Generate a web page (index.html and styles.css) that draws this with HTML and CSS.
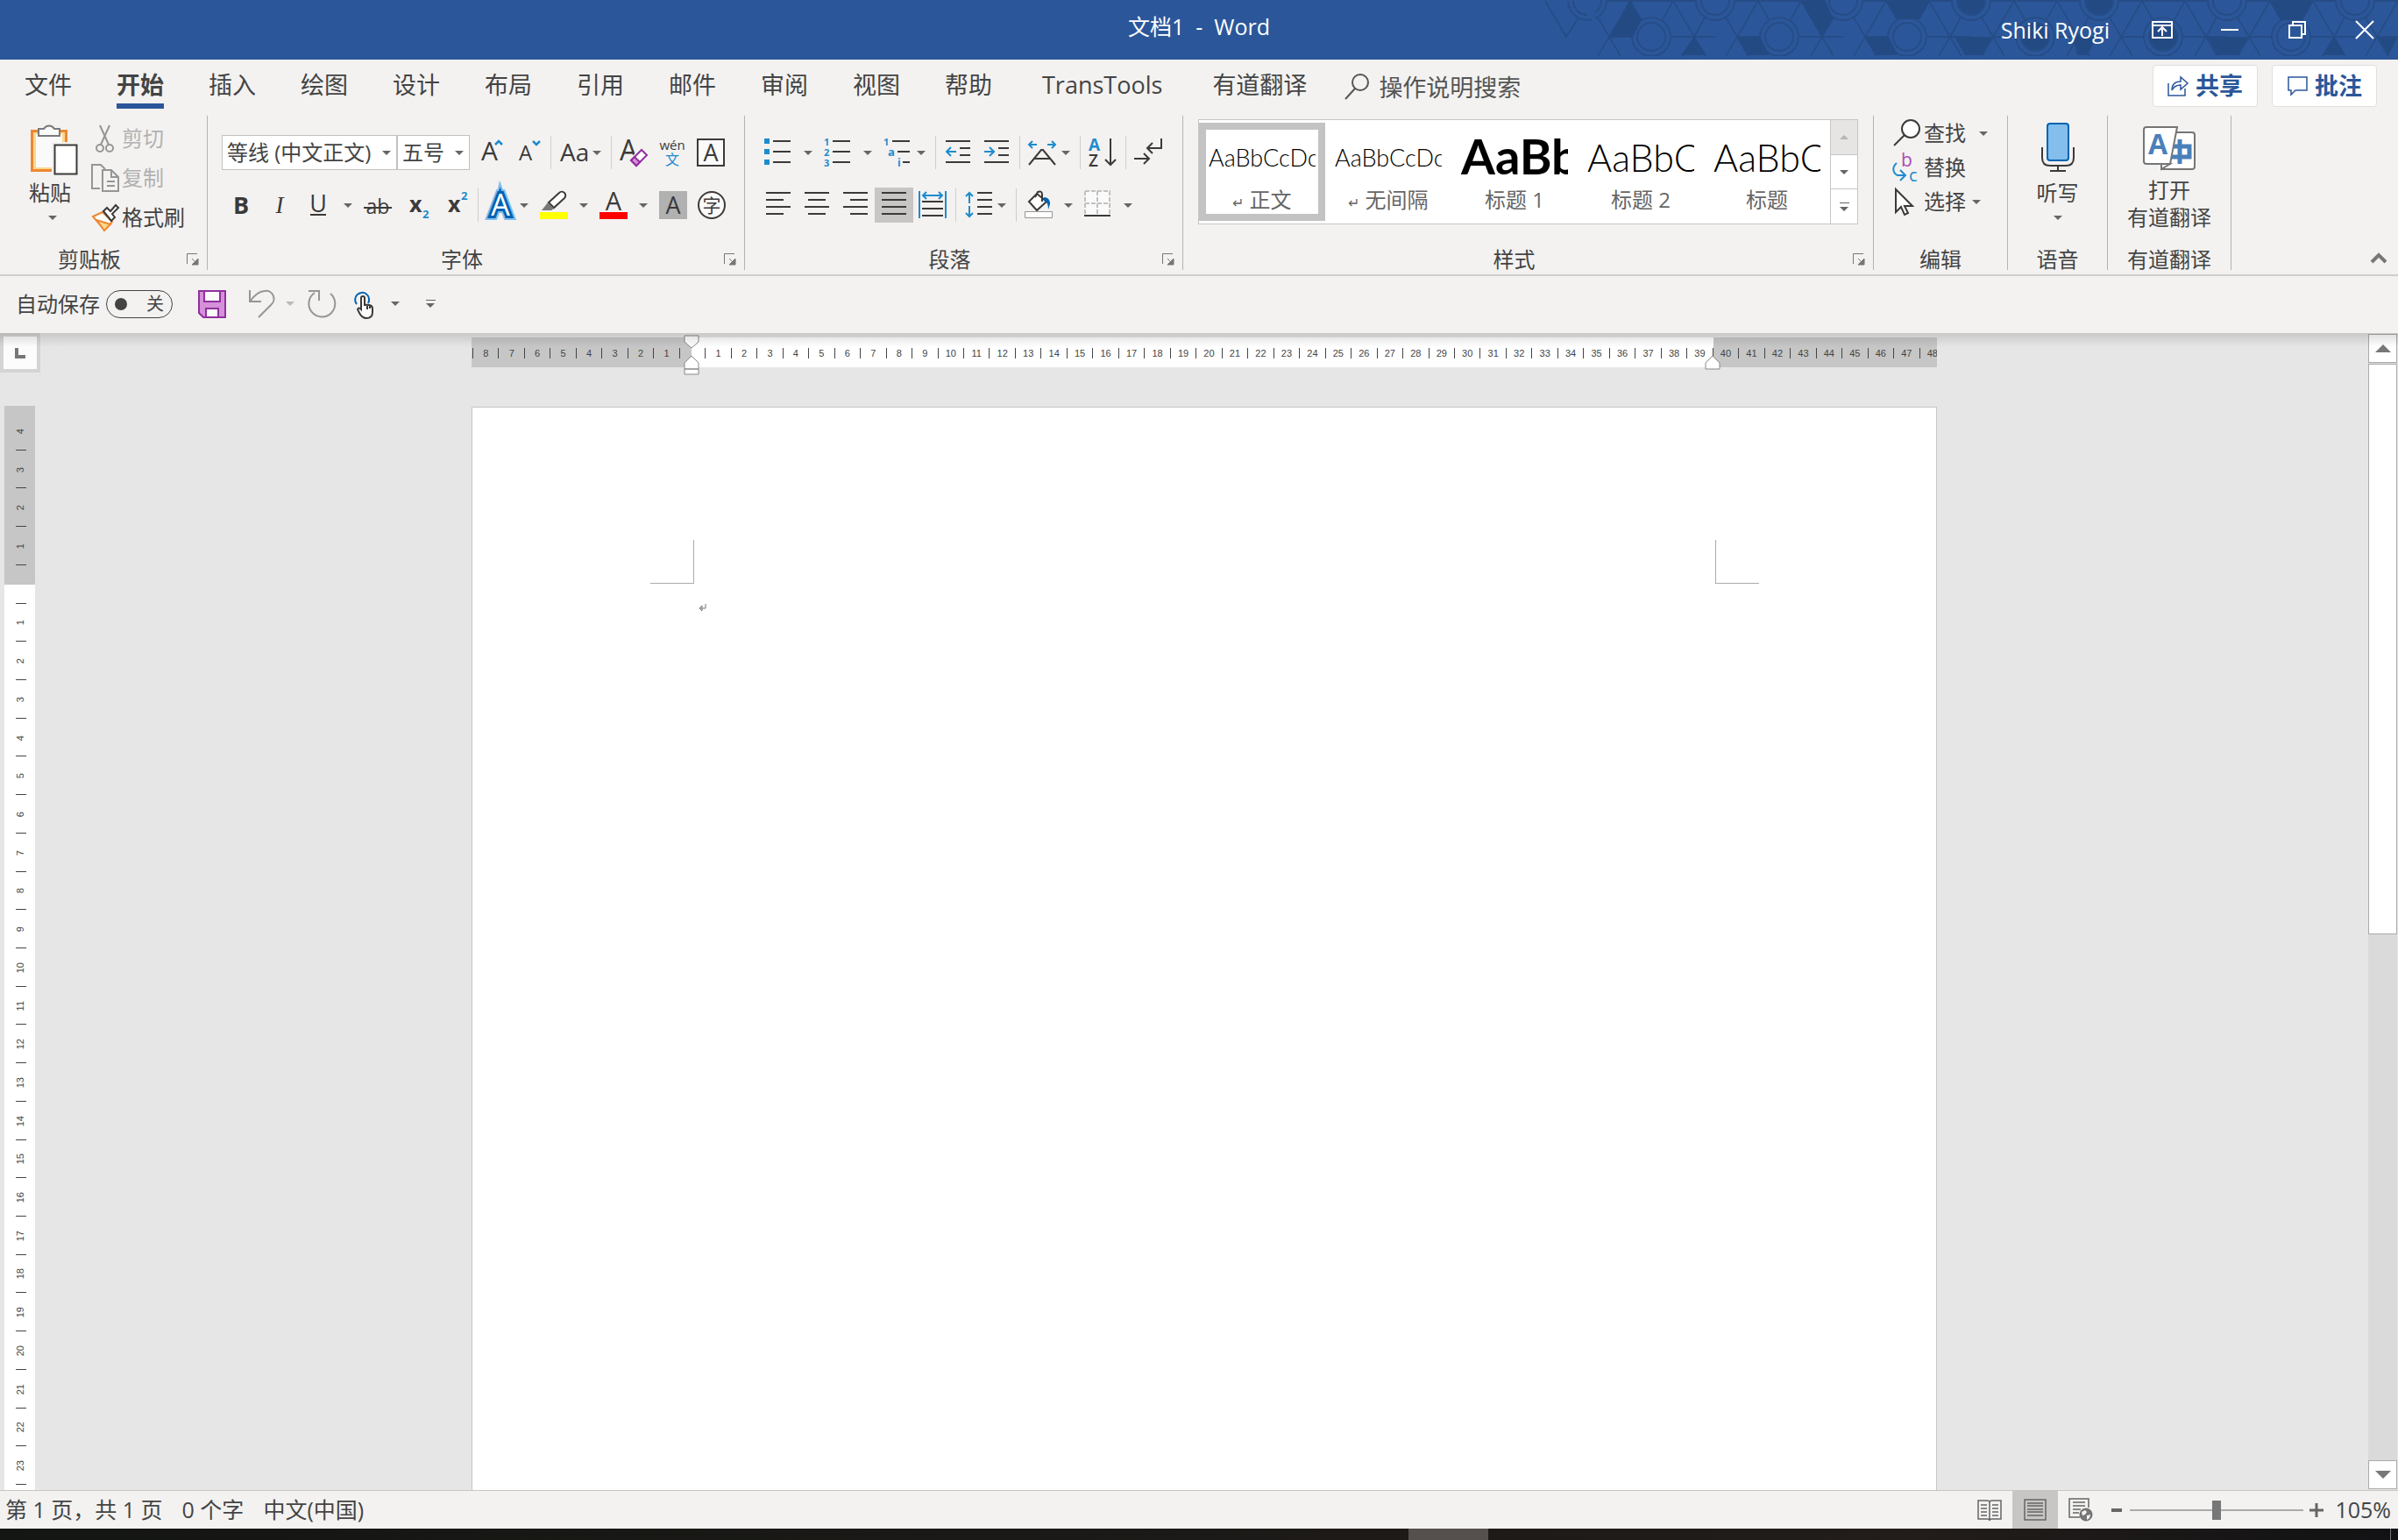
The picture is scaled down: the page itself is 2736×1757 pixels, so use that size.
FILE: index.html
```html
<!DOCTYPE html>
<html lang="zh-CN">
<head>
<meta charset="utf-8">
<title>文档1 - Word</title>
<link rel="stylesheet" href="styles.css">
</head>
<body>
<div class="app">
  <header class="titlebar">
    <svg class="title-art" width="976" height="64" viewBox="0 0 976 64" aria-hidden="true">
      <defs>
        <pattern id="mesh" x="51" y="0" width="146" height="64" patternUnits="userSpaceOnUse">
          <g fill="none" stroke="#264c87" stroke-width="2">
            <path d="M0 1H146M49 1L25 42L12 64M98 1L122 42L135 64M49 1L61 22M98 1L86 22M25 42L12 20M122 42L134 20M25 42L38 64M122 42L109 64M25 42H52M94 42H146"/>
          </g>
          <g fill="#2b579a" stroke="#264c87" stroke-width="2">
            <circle cx="0" cy="1" r="22"/><circle cx="146" cy="1" r="22"/><circle cx="73" cy="42" r="22"/>
            <circle cx="73" cy="42" r="16"/><circle cx="0" cy="1" r="16"/><circle cx="146" cy="1" r="16"/>
          </g>
        </pattern>
      </defs>
      <path d="M3 1L27 42L41 20" fill="none" stroke="#264c87" stroke-width="2"/>
      <rect x="60" y="0" width="916" height="64" fill="url(#mesh)"/>
      <path d="M51 17a16 16 0 0 1-16-16M56 22a22 22 0 0 1-27-21" fill="none" stroke="#264c87" stroke-width="2"/>
      <g fill="#244a84">
        <path d="M100 1l13 21-10 20H77zM173 42l14 21h-29zM223 42h25l11 21h-26zM295 1h28l9 21-13 20zM368 42h27l10 21h-25zM392 1h50l-12 21h-25zM470 42h43l-11 21h-20zM605 42h27l-10 21h-12zM758 42h47l-12 21h-23zM830 1h48l-11 22h-25zM903 42l12 21h-24zM952 42h24l-11 21z"/>
        <circle cx="489" cy="1" r="15"/><circle cx="635" cy="1" r="15"/><circle cx="562" cy="42" r="15"/><circle cx="708" cy="42" r="15"/>
      </g>
    </svg>
    <h1 class="doc-title">文档1&nbsp; -&nbsp; Word</h1>
    <div class="window-tools">
      <span class="account">Shiki Ryogi</span>
      <button class="win-btn" aria-label="功能区显示选项"><svg width="24" height="20" viewBox="0 0 24 20" fill="none" stroke="#fff" stroke-width="2"><path d="M1 1h22v18H1zM1 5h22M12 17V9M7 12l5-5 5 5"/></svg></button>
      <button class="win-btn" aria-label="最小化"><svg width="20" height="20" viewBox="0 0 20 20" fill="none" stroke="#fff" stroke-width="2"><path d="M0 10h20"/></svg></button>
      <button class="win-btn" aria-label="还原"><svg width="20" height="20" viewBox="0 0 20 20" fill="none" stroke="#fff" stroke-width="2"><path d="M1 5h14v14H1zM5 5V1h14v14h-4"/></svg></button>
      <button class="win-btn" aria-label="关闭"><svg width="20" height="20" viewBox="0 0 20 20" fill="none" stroke="#fff" stroke-width="2"><path d="M0 0l20 20M20 0L0 20"/></svg></button>
    </div>
  </header>

  <div class="tabbar">
    <nav class="tabs" aria-label="功能区选项卡">
      <button class="tab">文件</button>
      <button class="tab tab-active">开始</button>
      <button class="tab">插入</button>
      <button class="tab">绘图</button>
      <button class="tab">设计</button>
      <button class="tab">布局</button>
      <button class="tab">引用</button>
      <button class="tab">邮件</button>
      <button class="tab">审阅</button>
      <button class="tab">视图</button>
      <button class="tab">帮助</button>
      <button class="tab tab-latin">TransTools</button>
      <button class="tab">有道翻译</button>
    </nav>
    <label class="tellme">
      <svg width="30" height="32" viewBox="0 0 30 32" fill="none" stroke="#555" stroke-width="2"><circle cx="19" cy="11" r="9"/><path d="M13 18L2 30"/></svg>
      <input type="text" placeholder="操作说明搜索" aria-label="操作说明搜索">
    </label>
    <div class="share-tools">
      <button class="share-btn"><svg width="24" height="24" viewBox="0 0 24 24" fill="none" stroke="#2b579a" stroke-width="1.5"><path d="M1 9v14h19v-8M5 17c0-7 4-10 10-10V2l8 7-8 7v-5c-5 0-8 2-10 6z"/></svg>共享</button>
      <button class="share-btn"><svg width="24" height="24" viewBox="0 0 24 24" fill="none" stroke="#2b579a" stroke-width="1.5"><path d="M2 2h21v15H10l-5 5v-5H2z"/></svg>批注</button>
    </div>
  </div>

  <div class="ribbon">
    <section class="group g-clip">
      <div class="body clip-body">
        <button class="big paste">
          <svg width="54" height="60" viewBox="0 0 54 60"><path d="M1.500 9.500h39v45h-39z" fill="#fad88c" stroke="#ed8733" stroke-width="3"/><path d="M6 13h30v38H6z" fill="#fafafa"/><path d="M9 15V7h6a7 7 0 0 1 12 0h6v8z" fill="#fafafa" stroke="#7a7a7a" stroke-width="2"/><path d="M24 22h30v38H24z" fill="#f3f2f1"/><path d="M27.500 25.500h25v33h-25z" fill="#fff" stroke="#3b3a39" stroke-width="2"/></svg>
          <span>粘贴</span><i class="caret"></i>
        </button>
        <div class="stack clip-stack">
          <button class="cmd off"><svg width="32" height="32" viewBox="0 0 32 32" fill="none" stroke="#979593" stroke-width="2"><path d="M10 1l10 22M21 1L11 23"/><circle cx="10" cy="27" r="4"/><circle cx="21" cy="27" r="4"/></svg>剪切</button>
          <button class="cmd off"><svg width="32" height="32" viewBox="0 0 32 32" fill="none" stroke="#979593" stroke-width="2"><path d="M10 28H1V1h10l5 5"/><path d="M13 7h10l8 8v16H13zM23 7v8h8M18 20h9M18 25h9"/></svg>复制</button>
          <button class="cmd"><svg width="32" height="32" viewBox="0 0 32 32" fill="none" stroke="#3b3a39" stroke-width="2"><path d="M2 15l11-5 11 11-9 9z" fill="#fff" stroke="#ed8733"/><path d="M6 19l16 5-7 7z" fill="#fad88c" stroke="#ed8733"/><path d="M14 9l4-4 4 4 6-7 3 3-7 7 3 4-4 4z" fill="#fff"/></svg>格式刷</button>
        </div>
      </div>
      <footer class="foot"><span>剪贴板</span><button class="launcher" aria-label="剪贴板选项"><svg width="14" height="14" viewBox="0 0 14 14"><path d="M.500 12V.500H12" fill="none" stroke="#777"/><path d="M6 6l5 5M13 6v7H6z" fill="#777" stroke="#777"/></svg></button></footer>
    </section>

    <section class="group g-font">
      <div class="body rows">
        <div class="row">
          <label class="combo combo-font"><select aria-label="字体"><option>等线 (中文正文)</option></select><i class="caret"></i></label>
          <label class="combo combo-size"><select aria-label="字号"><option>五号</option></select><i class="caret"></i></label>
          <button class="ic ic-first" aria-label="增大字号"><svg width="32" height="32" viewBox="0 0 32 32"><text x="3" y="25" font-size="30" class="gl">A</text><path d="M19 7l4-4 4 4" fill="none" stroke="#1e8bcd" stroke-width="2.500"/></svg></button>
          <button class="ic ic-narrow" aria-label="减小字号"><svg width="32" height="32" viewBox="0 0 32 32"><text x="4" y="25" font-size="24" class="gl">A</text><path d="M20 3l4 4 4-4" fill="none" stroke="#1e8bcd" stroke-width="2.500"/></svg></button>
          <i class="sep"></i>
          <button class="ic" aria-label="更改大小写"><svg width="36" height="32" viewBox="0 0 36 32"><text x="3" y="26" font-size="28" class="gl">Aa</text></svg></button><button class="drop tight" aria-label="更多"><i class="caret"></i></button>
          <i class="sep"></i>
          <button class="ic" aria-label="清除格式"><svg width="32" height="32" viewBox="0 0 32 32"><text x="0" y="25" font-size="32" class="gl">A</text><path d="M13 25l12-12 6 6-12 12z" fill="#fff" stroke="#f3f2f1" stroke-width="5"/><path d="M13 25l12-12 6 6-12 12z" fill="#fff" stroke="#922fa0" stroke-width="2"/><path d="M13 25l4-4 6 6-4 4z" fill="#d490d8" stroke="#922fa0" stroke-width="2"/></svg></button>
          <button class="ic" aria-label="拼音指南"><svg width="32" height="32" viewBox="0 0 32 32"><text x="16" y="13" font-size="15" text-anchor="middle" class="gl">wén</text><text x="16" y="30" font-size="16" text-anchor="middle" class="gb">文</text></svg></button>
          <button class="ic" aria-label="字符边框"><svg width="32" height="32" viewBox="0 0 32 32"><path d="M1 1h30v30H1z" fill="#fafafa" stroke="#3b3a39" stroke-width="2"/><text x="16" y="26" font-size="27" text-anchor="middle" class="gl">A</text></svg></button>
        </div>
        <div class="row">
          <button class="ic t-b" aria-label="加粗">B</button>
          <button class="ic t-i" aria-label="倾斜">I</button>
          <button class="ic" aria-label="下划线"><svg width="32" height="32" viewBox="0 0 32 32"><text x="16" y="24" font-size="27" text-anchor="middle" class="gl">U</text><path d="M7 27h18" stroke="#3b3a39" stroke-width="2"/></svg></button><button class="drop" aria-label="更多"><i class="caret"></i></button>
          <button class="ic" aria-label="删除线"><svg width="32" height="32" viewBox="0 0 32 32"><text x="16" y="26" font-size="23" text-anchor="middle" class="gl">ab</text><path d="M0 19h32" stroke="#3b3a39" stroke-width="2"/></svg></button>
          <button class="ic" aria-label="下标"><svg width="32" height="32" viewBox="0 0 32 32"><text x="8" y="24" font-size="25" class="gl bold">x</text><text x="23" y="31" font-size="13" class="gb bold">2</text></svg></button>
          <button class="ic" aria-label="上标"><svg width="32" height="32" viewBox="0 0 32 32"><text x="8" y="24" font-size="25" class="gl bold">x</text><text x="23" y="10" font-size="13" class="gb bold">2</text></svg></button>
          <i class="sep"></i>
          <button class="ic" aria-label="文本效果"><svg width="32" height="32" viewBox="0 0 32 32"><g font-size="34" text-anchor="middle"><text x="16" y="28" class="halo">A</text><text x="16" y="28" class="rim">A</text></g></svg></button><button class="drop tight" aria-label="更多"><i class="caret"></i></button>
          <button class="ic" aria-label="突出显示"><svg width="32" height="32" viewBox="0 0 32 32"><path d="M10 13L22 2a4 4 0 0 1 6 6L16 19z" fill="#fff" stroke="#3b3a39" stroke-width="2"/><path d="M2 22l7-9 7 7-3 2z" fill="#777"/><path d="M0 24h32v8H0z" fill="#ff0"/></svg></button><button class="drop" aria-label="更多"><i class="caret"></i></button>
          <button class="ic" aria-label="字体颜色"><svg width="32" height="32" viewBox="0 0 32 32"><text x="16" y="22" font-size="29" text-anchor="middle" class="gl">A</text><path d="M0 24h32v8H0z" fill="#f00"/></svg></button><button class="drop" aria-label="更多"><i class="caret"></i></button>
          <button class="ic" aria-label="字符底纹"><svg width="32" height="32" viewBox="0 0 32 32"><path d="M0 0h32v32H0z" fill="#b1b1b1"/><text x="16" y="26" font-size="27" text-anchor="middle" class="gl">A</text></svg></button>
          <button class="ic" aria-label="带圈字符"><svg width="32" height="32" viewBox="0 0 32 32"><circle cx="16" cy="16" r="15" fill="#fafafa" stroke="#3b3a39" stroke-width="2"/><text x="16" y="24" font-size="21" text-anchor="middle" class="gl">字</text></svg></button>
        </div>
      </div>
      <footer class="foot"><span>字体</span><button class="launcher" aria-label="字体选项"><svg width="14" height="14" viewBox="0 0 14 14"><path d="M.500 12V.500H12" fill="none" stroke="#777"/><path d="M6 6l5 5M13 6v7H6z" fill="#777" stroke="#777"/></svg></button></footer>
    </section>

    <section class="group g-para">
      <div class="body rows">
        <div class="row">
          <button class="ic" aria-label="项目符号"><svg width="32" height="32" viewBox="0 0 32 32"><path d="M0 0h6v6H0zM0 12h6v6H0zM0 24h6v6H0z" fill="#1e8bcd"/><path d="M10 3h20M10 15h20M10 27h20" class="ln"/></svg></button><button class="drop" aria-label="更多"><i class="caret"></i></button>
          <button class="ic" aria-label="编号"><svg width="32" height="32" viewBox="0 0 32 32"><g font-size="11" class="gb bold"><text x="0" y="8">1</text><text x="0" y="20">2</text><text x="0" y="32">3</text></g><path d="M10 3h20M10 15h20M10 27h20" class="ln"/></svg></button><button class="drop" aria-label="更多"><i class="caret"></i></button>
          <button class="ic" aria-label="多级列表"><svg width="32" height="32" viewBox="0 0 32 32"><g font-size="11" class="gb bold"><text x="0" y="8">1</text><text x="5" y="20" font-size="13">a</text><text x="16" y="32" font-size="12">i</text></g><path d="M10 3h20M16 15h14M22 27h8" class="ln"/></svg></button><button class="drop tight" aria-label="更多"><i class="caret"></i></button>
          <i class="sep"></i>
          <button class="ic" aria-label="减少缩进量"><svg width="32" height="32" viewBox="0 0 32 32"><path d="M2 3h28M18 11h12M18 19h12M2 27h28" class="ln"/><path d="M14 15H3M8 10l-5 5 5 5" class="lb"/></svg></button>
          <button class="ic" aria-label="增加缩进量"><svg width="32" height="32" viewBox="0 0 32 32"><path d="M2 3h28M18 11h12M18 19h12M2 27h28" class="ln"/><path d="M2 15h11M8 10l5 5-5 5" class="lb"/></svg></button>
          <i class="sep"></i>
          <button class="ic" aria-label="中文版式"><svg width="32" height="32" viewBox="0 0 32 32"><path d="M1 30l14-17h2l14 17M7 23h18" class="ln"/><path d="M10 7H1M5 3L1 7l4 4M22 7h9M27 3l4 4-4 4" class="lb"/></svg></button><button class="drop tight" aria-label="更多"><i class="caret"></i></button>
          <i class="sep"></i>
          <button class="ic" aria-label="排序"><svg width="32" height="32" viewBox="0 0 32 32"><text x="0" y="14" font-size="19" class="gb bold">A</text><text x="0" y="32" font-size="19" class="gl semi">Z</text><path d="M25 0v30M19 24l6 6 6-6" class="ln"/></svg></button>
          <i class="sep"></i>
          <button class="ic" aria-label="显示编辑标记"><svg width="32" height="32" viewBox="0 0 32 32"><path d="M31 0v11H16M21 5l-6 6 6 6M0 23h17M11 17l6 6-6 6" class="ln"/></svg></button>
        </div>
        <div class="row">
          <button class="ic" aria-label="左对齐"><svg width="32" height="32" viewBox="0 0 32 32"><path d="M2 2h28M2 10h20M2 18h28M2 26h20" class="ln"/></svg></button>
          <button class="ic" aria-label="居中"><svg width="32" height="32" viewBox="0 0 32 32"><path d="M2 2h28M6 10h20M2 18h28M6 26h20" class="ln"/></svg></button>
          <button class="ic" aria-label="右对齐"><svg width="32" height="32" viewBox="0 0 32 32"><path d="M2 2h28M10 10h20M2 18h28M10 26h20" class="ln"/></svg></button>
          <button class="ic on" aria-label="两端对齐"><svg width="32" height="32" viewBox="0 0 32 32"><path d="M2 2h28M2 10h28M2 18h28M2 26h28" class="ln"/></svg></button>
          <button class="ic" aria-label="分散对齐"><svg width="32" height="32" viewBox="0 0 32 32"><path d="M4 12h24M4 20h24M4 28h24" class="ln"/><path d="M1 0v31M31 0v31M5 5h22M9 1L5 5l4 4M23 1l4 4-4 4" class="lb"/></svg></button>
          <i class="sep"></i>
          <button class="ic" aria-label="行距"><svg width="32" height="32" viewBox="0 0 32 32"><path d="M15 2h17M15 10h17M15 18h17M15 26h17" class="ln"/><path d="M6 14V2M2 6l4-4 4 4M6 17v12M2 25l4 4 4-4" class="lb"/></svg></button><button class="drop tight" aria-label="更多"><i class="caret"></i></button>
          <i class="sep"></i>
          <button class="ic" aria-label="底纹"><svg width="32" height="32" viewBox="0 0 32 32"><path d="M5 12l9-9 11 9-11 10z" fill="#fff" stroke="#3b3a39" stroke-width="2"/><path d="M12 7l3-6q5-2 5 3v8" fill="none" stroke="#3b3a39" stroke-width="2"/><path d="M22 7q7 0 7 8l-2 6q0-9-5-10z" fill="#0063b1"/><path d="M.500 23.500h31v7H.500z" fill="#fff" stroke="#979593"/></svg></button><button class="drop" aria-label="更多"><i class="caret"></i></button>
          <button class="ic" aria-label="边框"><svg width="32" height="32" viewBox="0 0 32 32"><path d="M1 0h29v28H1z" fill="#fafafa"/><path d="M1 0h29M1 14h29M1 0v26M15 0v26M29 0v26" fill="none" stroke="#c3c1bf" stroke-width="2" stroke-dasharray="5 2"/><path d="M0 28h30" class="ln"/></svg></button><button class="drop" aria-label="更多"><i class="caret"></i></button>
        </div>
      </div>
      <footer class="foot"><span>段落</span><button class="launcher" aria-label="段落选项"><svg width="14" height="14" viewBox="0 0 14 14"><path d="M.500 12V.500H12" fill="none" stroke="#777"/><path d="M6 6l5 5M13 6v7H6z" fill="#777" stroke="#777"/></svg></button></footer>
    </section>

    <section class="group g-style">
      <div class="body style-body">
        <div class="gallery">
          <button class="style chosen"><span class="sample s-body">AaBbCcDc</span><span class="name"><small>↵</small> 正文</span></button>
          <button class="style"><span class="sample s-body">AaBbCcDc</span><span class="name"><small>↵</small> 无间隔</span></button>
          <button class="style"><span class="sample s-h1">AaBb</span><span class="name">标题 1</span></button>
          <button class="style"><span class="sample s-h2">AaBbC</span><span class="name">标题 2</span></button>
          <button class="style"><span class="sample s-h2">AaBbC</span><span class="name">标题</span></button>
          <div class="gallery-nav">
            <button class="nav-off" aria-label="上一行"><i class="caret up"></i></button>
            <button aria-label="下一行"><i class="caret"></i></button>
            <button aria-label="其他"><i class="bar"></i><i class="caret"></i></button>
          </div>
        </div>
      </div>
      <footer class="foot"><span>样式</span><button class="launcher" aria-label="样式选项"><svg width="14" height="14" viewBox="0 0 14 14"><path d="M.500 12V.500H12" fill="none" stroke="#777"/><path d="M6 6l5 5M13 6v7H6z" fill="#777" stroke="#777"/></svg></button></footer>
    </section>

    <section class="group g-edit">
      <div class="body stack edit-stack">
        <button class="cmd"><svg width="34" height="32" viewBox="0 0 34 32" fill="#fff" stroke="#3b3a39" stroke-width="2"><circle cx="22" cy="11" r="10"/><path d="M15 18L3 30"/></svg>查找<i class="caret far"></i></button>
        <button class="cmd"><svg width="34" height="32" viewBox="0 0 34 32"><text x="11" y="15" font-size="21" fill="#ae4bb5">b</text><text x="20" y="32" font-size="20" class="gb">c</text><path d="M6 11c-6 5-4 12 1 14h9M10 19l6 6-6 6" class="lb"/></svg>替换</button>
        <button class="cmd"><svg width="34" height="32" viewBox="0 0 34 32" fill="#fff" stroke="#3b3a39" stroke-width="2"><path d="M5 2v26l6-6 4 9 4-2-4-8h9z"/></svg>选择<i class="caret near"></i></button>
      </div>
      <footer class="foot"><span>编辑</span></footer>
    </section>

    <section class="group g-voice">
      <div class="body">
        <button class="big">
          <svg width="40" height="60" viewBox="0 0 40 60" fill="none" stroke="#3b3a39" stroke-width="2"><rect x="8" y="1" width="24" height="42" rx="3" fill="#83beec" stroke="#0063b1"/><path d="M2 28v12q0 9 9 9h18q9 0 9-9V28M20 49v6M11 55h18"/></svg>
          <span>听写</span><i class="caret"></i>
        </button>
      </div>
      <footer class="foot"><span>语音</span></footer>
    </section>

    <section class="group g-youdao">
      <div class="body">
        <button class="big">
          <svg width="60" height="57" viewBox="0 0 60 57" stroke="#757575" stroke-width="2"><path d="M37 11h19q3 0 3 3v36q0 3-3 3H21l0-6z" fill="#fff"/><path d="M42 19v28M33 27h20v12H33" fill="none" stroke="#4a80ba" stroke-width="5"/><path d="M4 5h35l-8 42H4q-3 0-3-3V8q0-3 3-3z" fill="#fff"/><path d="M31 47l-10 6v-6z" fill="#fff"/><text x="17" y="36" font-size="32" text-anchor="middle" fill="#4a80ba" stroke="none" class="bold">A</text></svg>
          <span>打开</span><span>有道翻译</span>
        </button>
      </div>
      <footer class="foot"><span>有道翻译</span></footer>
    </section>

    <button class="collapse" aria-label="折叠功能区"><svg width="20" height="12" viewBox="0 0 20 12" fill="none" stroke="#777" stroke-width="4"><path d="M2 11l8-8 8 8"/></svg></button>
  </div>

  <div class="quick">
    <label class="autosave">自动保存<span class="switch"><input type="checkbox"><span class="knob"></span>关</span></label>
    <button class="qk" aria-label="保存"><svg width="32" height="32" viewBox="0 0 32 32" stroke="#922fa0" stroke-width="2"><path d="M1 1h30v30H6l-5-5z" fill="#d490d8"/><path d="M7 1h18v12H7zM9 21h14v10H9z" fill="#fafafa"/></svg></button>
    <button class="qk undo" aria-label="撤消"><svg width="32" height="32" viewBox="0 0 32 32" fill="none" stroke="#979593" stroke-width="2"><path d="M3 0v13h13M3 13C9 5 14 1 20 1a9 9 0 0 1 7 16L13 31"/></svg></button><button class="drop pale" aria-label="更多"><i class="caret"></i></button>
    <button class="qk" aria-label="恢复"><svg width="32" height="32" viewBox="0 0 32 32" fill="none" stroke="#979593" stroke-width="2"><path d="M0 1h12v11M7 3a15 15 0 1 0 18 1"/></svg></button>
    <button class="qk" aria-label="触摸/鼠标模式"><svg width="32" height="32" viewBox="0 0 32 32" fill="none" stroke="#3b3a39" stroke-width="2"><path d="M7 16a8 8 0 1 1 13-1" stroke="#0063b1"/><path d="M12 22V9q0-2 2-2t2 2v8q9-1 9 4v4q0 7-7 7-5 0-8-6l-2-4q1-3 4 0zM19 18v4M22 18v3" fill="#fff"/></svg></button><button class="drop" aria-label="更多"><i class="caret"></i></button>
    <button class="drop custom" aria-label="自定义快速访问工具栏"><i class="bar"></i><i class="caret"></i></button>
  </div>

  <main class="work">
    <div class="left-rail">
      <button class="tabstop" aria-label="制表符"><i></i></button>
      <div class="vruler" id="vruler"></div>
    </div>
    <div class="canvas">
      <div class="hruler">
        <div class="hruler-scale" id="hruler"></div>
        <svg class="marker m-left" width="18" height="46" viewBox="0 0 18 46" fill="#fff" stroke="#8a8886"><path d="M1 1h16v7l-8 7-8-7zM1 39v-7l8-8 8 8v7zM1 39h16v6H1z"/></svg>
        <svg class="marker m-right" width="18" height="46" viewBox="0 0 18 46" fill="#fff" stroke="#8a8886"><path d="M1 39v-7l8-8 8 8v7z"/></svg>
      </div>
      <article class="page" contenteditable="true" aria-label="文档正文">
        <span class="crop crop-l"></span><span class="crop crop-r"></span>
        <p><svg width="9" height="9" viewBox="0 0 9 9" fill="none" stroke="#777"><path d="M8 0v5H1M4 2L1 5l3 3z"/></svg></p>
      </article>
    </div>
    <div class="scroll">
      <button aria-label="向上滚动"><i class="tri tri-up"></i></button>
      <div class="track"><div class="thumb"></div></div>
      <button aria-label="向下滚动"><i class="tri tri-down"></i></button>
    </div>
  </main>

  <footer class="status">
    <span>第 1 页，共 1 页</span><span>0 个字</span><span>中文(中国)</span>
    <div class="views">
      <button aria-label="阅读视图"><svg width="28" height="26" viewBox="0 0 28 26" fill="none" stroke="#666"><path d="M1 2h10q3 0 3 2 0-2 3-2h10v21H17q-3 0-3 2 0-2-3-2H1zM14 4v20M4 7h7M4 11h7M4 15h7M4 19h7M17 7h7M17 11h7M17 15h7M17 19h7" stroke-width="1.500"/></svg></button>
      <button class="view-on" aria-label="页面视图"><svg width="26" height="26" viewBox="0 0 26 26" fill="none" stroke="#666"><path d="M1 1h24v23H1zM4 5h18M4 8h18M4 12h18M4 15h18M4 19h18" stroke-width="1.500"/></svg></button>
      <button aria-label="Web 版式视图"><svg width="28" height="28" viewBox="0 0 28 28" fill="none" stroke="#666"><path d="M13 22H1V1h22v10M5 5h14M5 9h14M5 13h9M5 17h7" stroke-width="1.500"/><circle cx="20" cy="19" r="7" fill="#777"/><path d="M15 16l4-2 2 2-2 3-3 1zM21 20l4-1-1 4-3 2z" fill="#f3f2f1" stroke="none"/></svg></button>
    </div>
    <div class="zoom">
      <button aria-label="缩小"><svg width="16" height="16" viewBox="0 0 16 16"><path d="M2 8h12" stroke="#666" stroke-width="4"/></svg></button>
      <input type="range" min="10" max="200" value="105" aria-label="缩放">
      <button aria-label="放大"><svg width="16" height="16" viewBox="0 0 16 16"><path d="M0 8h16M8 0v16" stroke="#666" stroke-width="3"/></svg></button>
      <button class="percent">105%</button>
    </div>
  </footer>
  <div class="taskbar"><span class="task"></span><span class="peek"></span></div>
</div>
<script src="app.js"></script>
</body>
</html>
```
FILE: styles.css
```css
* { box-sizing: border-box; }
body {
  margin: 0;
  font: 24px/32px "Open Sans", "Noto Sans CJK SC", sans-serif;
  color: #444;
  background: #f3f2f1;
}
button, input, select {
  font: inherit;
  color: inherit;
  border: 0;
  padding: 0;
  margin: 0;
  background: none;
}
svg { display: block; flex: none; overflow: visible; }
h1, p { margin: 0; }
.app { display: flex; flex-direction: column; height: 100vh; overflow: hidden; }

/* icon strokes and letters */
.ln { fill: none; stroke: #3b3a39; stroke-width: 2; }
.lb { fill: none; stroke: #1e8bcd; stroke-width: 2; }
.gl { fill: #3b3a39; }
.gb { fill: #1e8bcd; }
.bold { font-weight: 700; }
.semi { font-weight: 600; }
.halo { fill: #83beec; stroke: #83beec; stroke-width: 10; }
.rim { fill: #fff; stroke: #0063b1; stroke-width: 6; paint-order: stroke; }

.caret {
  display: block;
  flex: none;
  border: 5px solid transparent;
  border-top-color: #666;
  border-bottom: 0;
}
.caret.up { border-top: 0; border-bottom: 5px solid #b8b6b4; }
.bar { display: block; width: 11px; height: 1px; background: #666; }

/* title bar */
.titlebar {
  position: relative;
  flex: none;
  height: 68px;
  display: grid;
  grid-template-columns: 1fr auto 1fr;
  align-items: center;
  background: #2b579a;
  color: #fff;
  font-size: 25px;
}
.title-art { position: absolute; right: 0; top: 0; }
.doc-title { grid-column: 2; font-size: 25px; font-weight: 400; padding-bottom: 8px; }
.window-tools { position: relative; display: flex; justify-content: flex-end; align-items: center; }
.account { margin-right: 21px; }
.win-btn { width: 77px; height: 64px; display: grid; place-items: center; }

/* tabs */
.tabbar { flex: none; height: 64px; display: flex; align-items: flex-start; padding-right: 24px; font-size: 27px; }
.tabs { display: flex; padding-left: 28px; gap: 51px; }
.tab { height: 56px; padding: 8px 0 0; border-bottom: 6px solid transparent; white-space: nowrap; }
.tab-active { font-weight: 700; border-bottom-color: #2b579a; }
.tab-latin { margin: 0 6px; }
.tellme { display: flex; align-items: center; gap: 10px; height: 62px; margin-left: 42px; }
.tellme input { width: 200px; height: 40px; outline: 0; }
.tellme input::placeholder { color: #555; opacity: 1; }
.share-tools { display: flex; gap: 16px; margin: 6px 0 0 auto; }
.share-btn {
  width: 120px;
  height: 48px;
  display: flex;
  align-items: center;
  justify-content: center;
  gap: 8px;
  background: #fff;
  border: 1px solid #e1dfdd;
  border-radius: 4px;
  color: #2b579a;
  font-weight: 700;
}

/* ribbon */
.ribbon { flex: none; display: flex; height: 183px; border-bottom: 2px solid #d0cecc; padding-bottom: 5px; }
.group { flex: none; display: flex; flex-direction: column; border-right: 1px solid #b5b3b1; }
.g-clip { width: 237px; }
.g-font { width: 613px; }
.g-para { width: 500px; }
.g-style { width: 788px; }
.g-edit { width: 153px; }
.g-voice { width: 114px; }
.g-youdao { width: 141px; }
.body { flex: 1; min-height: 0; }
.foot { display: flex; align-items: center; height: 32px; margin-bottom: -4px; }
.foot span { flex: 1; text-align: center; }
.launcher { width: 32px; height: 24px; display: grid; place-items: center; }

.big { width: 100%; display: flex; flex-direction: column; align-items: center; padding-top: 8px; line-height: 31px; }
.big svg { margin-bottom: 4px; }
.big .caret { margin-top: 11px; }
.clip-body { display: flex; }
.paste { width: 104px; padding-left: 20px; }
.paste span { margin-right: 10px; }
.paste .caret { margin-right: 4px; }
.stack { display: flex; flex-direction: column; align-items: flex-start; }
.cmd { display: flex; align-items: center; gap: 3px; white-space: nowrap; }
.clip-stack { gap: 13px; padding-top: 10px; }
.edit-stack { gap: 7px; padding: 4px 0 0 20px; }
.off { color: #b1b1b1; }
.far { margin-left: 12px; }
.near { margin-left: 4px; }

.rows { display: flex; flex-direction: column; gap: 20px; padding: 22px 0 0 16px; }
.row { display: flex; align-items: center; height: 40px; }
.ic { flex: none; width: 44px; height: 40px; display: grid; place-items: center; color: #3b3a39; }
.ic-first { margin-left: 4px; }
.ic-narrow { width: 40px; }
.on { background: #c8c6c4; }
.t-b { font-size: 27px; font-weight: 700; }
.t-i { font-size: 27px; font-family: "Liberation Serif", serif; font-style: italic; }
.drop { flex: none; width: 24px; height: 40px; display: grid; place-items: center; }
.tight { width: 17px; justify-items: start; }
.sep { flex: none; width: 8px; height: 38px; background: linear-gradient(#d0cecc, #d0cecc) center / 1px 100% no-repeat; }
.combo { position: relative; height: 40px; border: 1px solid #c3c1bf; background: #fff; }
.combo select { width: 100%; height: 100%; padding-left: 5px; appearance: none; outline: 0; }
.combo .caret { position: absolute; right: 6px; top: 17px; pointer-events: none; }
.combo-font { width: 200px; }
.combo-size { width: 83px; }

.style-body { padding: 4px 17px 0; }
.gallery { display: flex; height: 120px; border: 1px solid #c8c6c4; background: #fff; }
.style { flex: none; width: 144px; height: 112px; margin-top: 3px; padding: 0 3px; border: 8px solid transparent; display: flex; flex-direction: column; }
.chosen { border-color: #c3c3c3; }
.sample { flex: none; width: 122px; height: 64px; overflow: hidden; text-align: left; white-space: nowrap; color: #000; font-family: Lato, sans-serif; font-weight: 300; }
.s-body { font-size: 27px; line-height: 64px; }
.s-h1 { font-size: 56px; line-height: 60px; font-weight: 700; }
.s-h2 { font-size: 43px; line-height: 64px; }
.name { flex: none; width: 122px; text-align: center; color: #666; white-space: nowrap; }
.name small { font-size: 16px; line-height: 16px; }
.gallery-nav { flex: 1; display: flex; flex-direction: column; border-left: 1px solid #c8c6c4; }
.gallery-nav button { flex: 1; display: flex; flex-direction: column; gap: 4px; align-items: center; justify-content: center; border-bottom: 1px solid #c8c6c4; }
.gallery-nav button:last-child { border: 0; }
.nav-off { background: #e6e5e4; }
.collapse { align-self: flex-end; margin: 0 12px 8px auto; }

/* quick access bar */
.quick { flex: none; height: 65px; display: flex; align-items: center; padding: 0 0 2px 18px; }
.autosave { display: flex; align-items: center; gap: 7px; margin-right: 22px; }
.switch { position: relative; width: 76px; height: 32px; display: flex; align-items: center; gap: 22px; padding-left: 9px; border: 1px solid #444; border-radius: 16px; font-size: 20px; }
.switch input { position: absolute; inset: 0; width: 100%; height: 100%; opacity: 0; }
.knob { width: 14px; height: 14px; border-radius: 50%; background: #444; }
.qk { flex: none; width: 46px; height: 40px; display: grid; place-items: center; }
.qk + .qk { margin-left: 2px; }
.quick .undo { margin-left: 10px; }
.pale { opacity: .4; width: 20px; }
.pale + .qk { margin-left: 4px; }
.custom { display: flex; flex-direction: column; align-items: center; justify-content: center; gap: 3px; margin-left: 16px; }

/* document area */
.work { position: relative; flex: 1; min-height: 0; display: flex; background: #e6e6e6; }
.work::before { content: ""; position: absolute; left: 0; right: 0; top: 0; height: 16px; background: linear-gradient(rgba(0, 0, 0, .13), rgba(0, 0, 0, 0)); pointer-events: none; z-index: 1; }
.left-rail { flex: none; width: 46px; display: flex; flex-direction: column; }
.tabstop { width: 46px; height: 45px; display: grid; place-items: center; border: 4px solid #d4d4d4; background: #fcfcfc; }
.tabstop i { width: 12px; height: 12px; border: solid #777; border-width: 0 0 4px 4px; }
.vruler { flex: 1; min-height: 0; overflow: hidden; width: 35px; margin: 38px 0 0 5px; padding-top: 7px; background: linear-gradient(#c6c6c6 204px, #fff 204px); }
.vscale { display: grid; height: 1224px; grid-auto-rows: 1fr; font: 11px/12px "Liberation Sans", sans-serif; }
.vscale span { display: flex; align-items: center; justify-content: center; position: relative; }
.vscale b { font-weight: 400; writing-mode: vertical-rl; transform: rotate(180deg); }
.vscale span::after { content: ""; position: absolute; bottom: 0; left: 13px; width: 12px; height: 1px; background: #444; }
.canvas { flex: 1; min-width: 0; display: flex; flex-direction: column; align-items: center; }
.hruler { position: relative; flex: none; width: 1672px; height: 34px; margin-top: 5px; background: linear-gradient(90deg, #c6c6c6 251px, #fff 251px 1417px, #c6c6c6 1417px); }
.hruler-scale { height: 34px; overflow: hidden; padding-top: 12px; font: 11px/12px "Liberation Sans", sans-serif; }
.hscale { display: grid; width: 1680px; grid-auto-flow: column; grid-auto-columns: 1fr; margin-left: 1px; }
.hscale span { height: 12px; text-align: center; border-left: 1px solid #444; }
.marker { position: absolute; top: -3px; }
.m-left { left: 242px; }
.m-right { left: 1407px; }
.page { position: relative; flex: 1; width: 1672px; margin-top: 45px; border: 1px solid #c6c6c6; border-bottom: 0; background: #fff; outline: 0; padding: 224px 252px 0 258px; }
.crop { position: absolute; top: 151px; width: 50px; height: 50px; border: solid #ababab; border-width: 0 0 1px; }
.crop-l { left: 203px; border-right-width: 1px; }
.crop-r { right: 202px; border-left-width: 1px; }

.scroll { flex: none; width: 34px; display: flex; flex-direction: column; padding: 1px 1px 1px 0; }
.scroll button { height: 33px; display: grid; place-items: center; background: #fff; border: 1px solid #ababab; }
.track { flex: 1; min-height: 0; background: #dadada; padding-top: 1px; }
.thumb { height: 52%; background: #fff; border: 1px solid #ababab; }
.tri { border: 9px solid transparent; }
.tri-up { border-top: 0; border-bottom-color: #777; }
.tri-down { border-bottom: 0; border-top-color: #777; }

/* status bar */
.status { flex: none; height: 44px; display: flex; align-items: stretch; font-size: 25px; line-height: 43px; border-top: 1px solid #c6c6c6; padding: 0 8px 0 6px; }
.status > span { margin-right: 22px; }
.views { display: flex; margin-left: auto; }
.views button { width: 52px; display: grid; place-items: center; }
.view-on { background: #c8c6c4; }
.zoom { display: flex; align-items: center; margin-left: 7px; }
.zoom input { appearance: none; width: 198px; height: 24px; margin: 0 7px; background: linear-gradient(#ababab, #ababab) center / 100% 2px no-repeat; }
.zoom input::-webkit-slider-thumb { appearance: none; width: 10px; height: 22px; background: #777; }
.percent { margin-left: 13px; }

.taskbar { flex: none; height: 13px; display: flex; background: linear-gradient(90deg, #141613, #1d1a18 60%, #221d1a 80%, #121214); }
.task { width: 91px; margin-left: 1607px; background: #55504e; }
.peek { width: 1px; margin-left: auto; margin-right: 8px; background: #777; }
```
FILE: app.js
```js
// Fill a ruler with numbered cells, counting away from the zero mark.
function fillRuler(id, scaleClass, first, last, wrap) {
  const scale = document.createElement("div");
  scale.className = scaleClass;
  for (let n = first; n <= last; n++) {
    const cell = document.createElement("span");
    const text = n === 0 ? "" : String(Math.abs(n));
    if (wrap) {
      const label = document.createElement("b");
      label.textContent = text;
      cell.appendChild(label);
    } else {
      cell.textContent = text;
    }
    scale.appendChild(cell);
  }
  document.getElementById(id).appendChild(scale);
}
fillRuler("hruler", "hscale", -8, 48, false);
fillRuler("vruler", "vscale", -4, 23, true);
```
